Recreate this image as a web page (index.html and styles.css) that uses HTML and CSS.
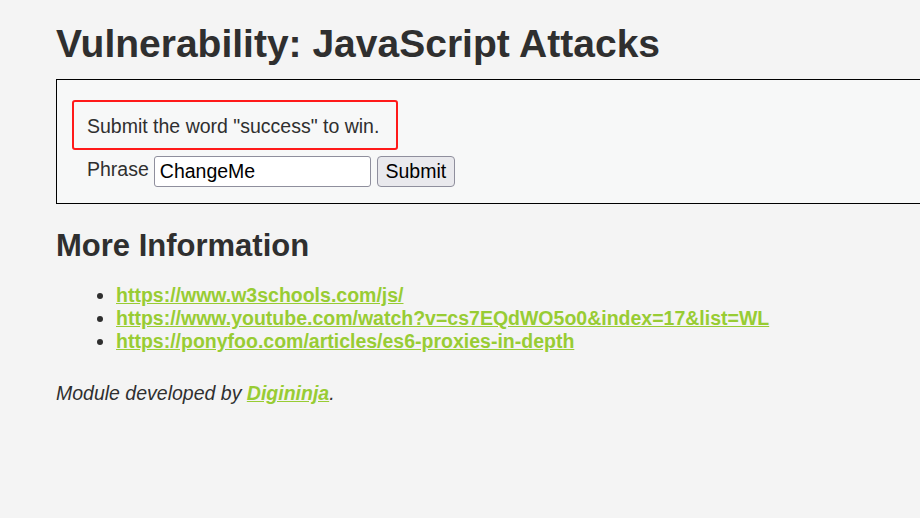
FILE: index.html
```html
<!DOCTYPE html>
<html>
<head>
<meta charset="utf-8">
<title>Vulnerability: JavaScript Attacks</title>
<link rel="stylesheet" href="styles.css">
</head>
<body>
<div class="page">
  <h1 class="title">Vulnerability: JavaScript Attacks</h1>
  <div class="vulnerable-box">
    <div class="notice">Submit the word "success" to win.</div>
    <form class="phrase-form">
      <label class="phrase-label" for="phrase">Phrase</label>
      <input class="phrase-input" type="text" id="phrase" value="ChangeMe">
      <button class="submit-btn" type="button">Submit</button>
    </form>
  </div>
  <h2 class="subtitle">More Information</h2>
  <ul class="links">
    <li><a href="#">https://www.w3schools.com/js/</a></li>
    <li><a href="#">https://www.youtube.com/watch?v=cs7EQdWO5o0&amp;index=17&amp;list=WL</a></li>
    <li><a href="#">https://ponyfoo.com/articles/es6-proxies-in-depth</a></li>
  </ul>
  <p class="credit">Module developed by <a href="#">Digininja</a>.</p>
</div>
</body>
</html>
```

FILE: styles.css
```css
html, body {
  margin: 0;
  padding: 0;
  background: #f4f4f4;
}

body {
  font-family: "Liberation Sans", Arial, sans-serif;
  font-size: 19.5px;
  color: #2f2f2f;
  overflow: hidden;
}

.page {
  padding: 21px 0 0 56px;
}

.title {
  margin: 0 0 13px 0;
  font-size: 39px;
  font-weight: bold;
  line-height: 45px;
  color: #2f2f2f;
}

.vulnerable-box {
  border: 1px solid #000;
  border-right: none;
  background: #f7f8f8;
  padding: 20px 0 16px 15px;
}

.notice {
  display: inline-block;
  box-sizing: border-box;
  width: 326px;
  height: 50px;
  border: 2px solid #ff1a1a;
  border-radius: 3px;
  padding: 13px 10px 0 13px;
  line-height: 22px;
}

.phrase-form {
  display: flex;
  align-items: center;
  margin: 5px 0 0 15px;
  height: 32px;
}

.phrase-label {
  margin-right: 5px;
  position: relative;
  top: -2px;
}

.phrase-input {
  box-sizing: border-box;
  width: 217px;
  height: 31px;
  border: 1px solid #8f8f9d;
  border-radius: 3px;
  background: #fff;
  font-family: "Liberation Sans", Arial, sans-serif;
  font-size: 19.5px;
  color: #000;
  padding: 0 5px;
  margin: 0;
}

.submit-btn {
  box-sizing: border-box;
  width: 78px;
  height: 31px;
  margin: 0 0 0 6px;
  border: 1px solid #8f8f9d;
  border-radius: 4px;
  background: #e9e9ed;
  font-family: "Liberation Sans", Arial, sans-serif;
  font-size: 19.5px;
  color: #000;
  padding: 0;
}

.subtitle {
  margin: 24px 0 0 0;
  font-size: 31px;
  font-weight: bold;
  line-height: 36px;
  color: #2f2f2f;
}

.links {
  margin: 20px 0 0 0;
  padding-left: 60px;
  line-height: 23px;
}

.links a,
.credit a {
  color: #98cc33;
  font-weight: bold;
  text-decoration: underline;
}

.credit {
  margin: 29px 0 0 0;
  font-style: italic;
  line-height: 23px;
}
```
